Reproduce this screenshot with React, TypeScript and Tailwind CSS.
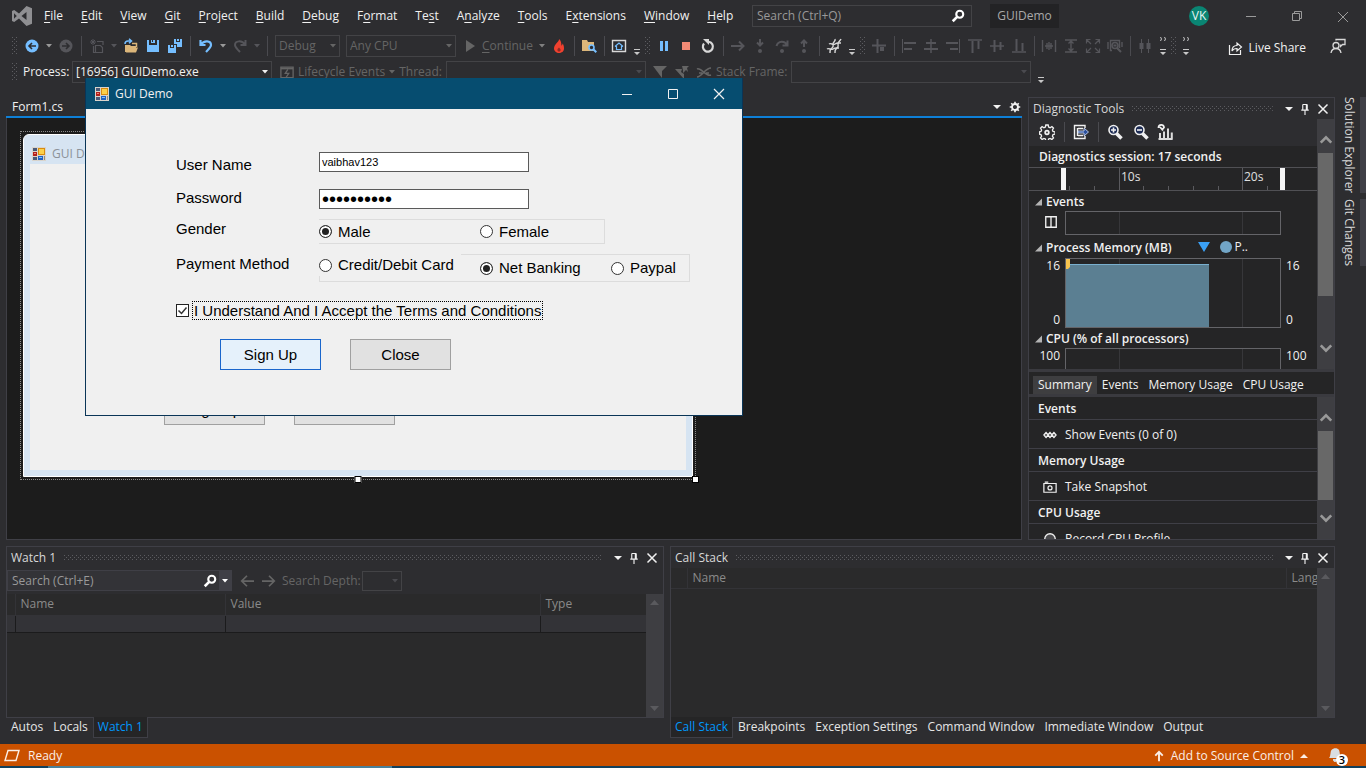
import React, { useId } from "react";
import clsx from "clsx";

const menus = [
  ["", "F", "ile"],
  ["", "E", "dit"],
  ["", "V", "iew"],
  ["", "G", "it"],
  ["", "P", "roject"],
  ["", "B", "uild"],
  ["", "D", "ebug"],
  ["F", "o", "rmat"],
  ["Te", "s", "t"],
  ["A", "n", "alyze"],
  ["", "T", "ools"],
  ["E", "x", "tensions"],
  ["", "W", "indow"],
  ["", "H", "elp"],
];

const stackTabs = [
  "Call Stack",
  "Breakpoints",
  "Exception Settings",
  "Command Window",
  "Immediate Window",
  "Output",
];

type IconProps = { children: React.ReactNode; className?: string; size?: number };

function Icon({ children, className, size = 16 }: IconProps) {
  return (
    <svg
      width={size}
      height={size}
      viewBox="0 0 16 16"
      fill="none"
      stroke="currentColor"
      strokeWidth="2"
      aria-hidden="true"
      className={clsx("shrink-0", className)}
    >
      {children}
    </svg>
  );
}

function ToolButton({ label, children, className }: { label: string; children: React.ReactNode; className?: string }) {
  return (
    <button type="button" aria-label={label} className={clsx("flex shrink-0 items-center justify-center", className)}>
      {children}
    </button>
  );
}

function Caret({ className }: { className?: string }) {
  return (
    <svg width="6" height="4" viewBox="0 0 6 4" aria-hidden="true" className={clsx("shrink-0", className)}>
      <path d="M0 0h6L3 3.5z" fill="currentColor" />
    </svg>
  );
}

function Dots({ className }: { className?: string }) {
  const id = useId();
  return (
    <svg aria-hidden="true" className={className}>
      <pattern id={id} width="4" height="4" patternUnits="userSpaceOnUse">
        <rect width="1" height="1" fill="#5c5c60" />
        <rect x="2" y="2" width="1" height="1" fill="#5c5c60" />
      </pattern>
      <rect width="100%" height="100%" fill={`url(#${id})`} />
    </svg>
  );
}

function Grip() {
  return <Dots className="h-[18px] w-[5px] shrink-0" />;
}

function Sep({ tight }: { tight?: boolean }) {
  return <span className={clsx("h-5 w-px shrink-0 bg-[#4a4a4f]", tight ? "ml-px" : "mx-px")} />;
}

function Overflow({ chevrons }: { chevrons?: boolean }) {
  return (
    <ToolButton label="Toolbar options">
      <svg width="8" height="20" viewBox="0 0 8 20" fill="#c8c8c8" aria-hidden="true">
        {chevrons && <path d="M1 1h1l1 2-1 2H1l1-2zM5 1h1l1 2-1 2H5l1-2z" />}
        <path d="M1 13h6v1H1zM1 16h6l-3 3z" />
      </svg>
    </ToolButton>
  );
}

function Combo({ label, value, className, tone }: { label: string; value: string; className: string; tone: string }) {
  return (
    <span className={clsx("relative flex shrink-0 items-center", className, tone)}>
      <select
        aria-label={label}
        defaultValue={value}
        className="h-full w-full appearance-none border border-[#434346] bg-transparent pl-[3px] outline-none"
      >
        <option>{value}</option>
      </select>
      <Caret className="pointer-events-none absolute right-1" />
    </span>
  );
}

function FormIcon({ className }: { className?: string }) {
  return (
    <svg width="14" height="14" viewBox="0 0 14 14" aria-hidden="true" className={className}>
      <path d="M0 0h14v14H0z" fill="#d9d4cc" />
      <path d="M1 1h4v3H1zM1 10h4v3H1z" fill="#4a5a78" />
      <path d="M1 5h4v4H1z" fill="#b3201a" />
      <path d="M2 6h2v1H2z" fill="#e8877c" />
      <path d="M6 1h7v7H6z" fill="#d98c10" />
      <path d="M7 2h5v5H7z" fill="#fbd04a" />
      <path d="M6 9h5v4H6z" fill="#1f62c4" />
      <path d="M7 10h3v1H7z" fill="#7fc0f5" />
      <path d="M12 9h1v4h-1z" fill="#8d8a85" />
    </svg>
  );
}

function Magnifier({ className }: { className?: string }) {
  return (
    <Icon size={14} className={className}>
      <circle cx="10" cy="6" r="4" strokeWidth="2.4" />
      <path d="M7 9 2 14" strokeWidth="3" />
    </Icon>
  );
}

function TitleBar() {
  return (
    <header className="flex h-8 shrink-0 items-center pl-3">
      <svg width="20" height="20" viewBox="0 0 20 20" aria-hidden="true" className="shrink-0">
        <path
          fillRule="evenodd"
          fill="#8f8f92"
          d="M14.5 0 20 2.3v15.4L14.5 20 7 12.5 2.2 16 0 15V5l2.2-1L7 7.5zM14.5 6l-5 4 5 4zM2 7.3v5.4L4.8 10z"
        />
      </svg>
      <nav className="ml-3 flex gap-[18px]">
        {menus.map(([before, key, after]) => (
          <button key={key + after} type="button" className="whitespace-nowrap">
            {before}
            <u className="underline-offset-2">{key}</u>
            {after}
          </button>
        ))}
      </nav>
      <label className="ml-auto flex h-[22px] w-[220px] shrink-0 items-center border border-[#434346] px-1">
        <input
          aria-label="Search"
          placeholder="Search (Ctrl+Q)"
          className="min-w-0 flex-1 bg-transparent outline-none placeholder:text-[#999999]"
        />
        <Magnifier className="mr-0.5 text-white" />
      </label>
      <span className="ml-[18px] flex h-6 w-[69px] shrink-0 items-center justify-center bg-[#232325] text-[#a9a9a9]">
        GUIDemo
      </span>
      <button
        type="button"
        className="ml-[130px] size-5 shrink-0 rounded-full bg-[#0a8573] text-center leading-5 text-[#e8f5f3]"
      >
        VK
      </button>
      <div className="ml-[19px] flex text-[#9a9a9a]">
        <ToolButton label="Minimize" className="w-[46px]">
          <Icon>
            <path d="M3 8.500h10" strokeWidth="1" />
          </Icon>
        </ToolButton>
        <ToolButton label="Restore" className="w-[46px]">
          <Icon>
            <path d="M3.500 5.500h7v7h-7zM5.500 5.500v-2h7v7h-2" strokeWidth="1" />
          </Icon>
        </ToolButton>
        <ToolButton label="Close window" className="w-[46px]">
          <Icon>
            <path d="m3 4 10 10M13 4 3 14" strokeWidth="1" />
          </Icon>
        </ToolButton>
      </div>
    </header>
  );
}

function StandardToolbar() {
  return (
    <div className="flex h-7 shrink-0 items-center pl-3 text-[#55555a]">
      <div className="flex items-center gap-1.5">
        <Grip />
        <ToolButton label="Back" className="ml-px text-[#75beff]">
          <Icon>
            <circle cx="8" cy="8" r="6.500" fill="currentColor" stroke="none" />
            <path d="M12 8H5M8 5 5 8l3 3" stroke="#2d2d30" strokeWidth="1.600" />
          </Icon>
        </ToolButton>
        <Caret className="text-[#999999]" />
        <ToolButton label="Forward">
          <Icon>
            <circle cx="8" cy="8" r="6.500" fill="currentColor" stroke="none" />
            <path d="M4 8h7M8 5l3 3-3 3" stroke="#2d2d30" strokeWidth="1.600" />
          </Icon>
        </ToolButton>
        <Sep />
        <ToolButton label="New project">
          <Icon>
            <path d="M4 1v6M1 4h6M2 2l4 4M6 2 2 6" strokeWidth="1" />
            <path d="M8 3.500h6M14 3v4M4.500 8v6.500H11M6.500 7.500h5l2 2v5h-7z" strokeWidth="1.200" />
          </Icon>
        </ToolButton>
        <Caret />
        <ToolButton label="Open">
          <Icon>
            <path d="M2 14V7h5l1 1h5v2H6l-2 4z" fill="#dcb67a" stroke="none" />
            <path d="M5.500 9.500H15L13 14.500H3z" fill="#dcb67a" stroke="none" />
            <path d="M2 6c0-2 1-3 3-3h3M6 .8 8.500 3 6 5.200" stroke="#75beff" strokeWidth="1.500" />
            <path d="M9 5.500h4.500V9" stroke="#dcb67a" strokeWidth="1.500" />
          </Icon>
        </ToolButton>
        <ToolButton label="Save" className="text-[#75beff]">
          <Icon>
            <path d="M2 2h2v5h8V2h2v12H2zM6 2h4v3H6z" fill="currentColor" stroke="none" />
            <path d="M7 2h1v2H7z" fill="#2d2d30" stroke="none" />
          </Icon>
        </ToolButton>
        <ToolButton label="Save all" className="text-[#75beff]">
          <Icon>
            <path
              d="M7 1h2v3h4V1h2v8h-5V6H7zM10 1h2v2h-2zM1 7h2v3h4V7h2v8H1zM4 7h2v2H4z"
              fill="currentColor"
              stroke="none"
            />
          </Icon>
        </ToolButton>
        <Sep />
        <ToolButton label="Undo" className="text-[#75beff]">
          <Icon>
            <path d="M2.500 2v5h5M3 6.500C6 2 13 2.500 13 7c0 2-1 3-5 7" strokeWidth="2.200" />
          </Icon>
        </ToolButton>
        <Caret className="text-[#999999]" />
        <ToolButton label="Redo">
          <Icon>
            <path d="M13.500 2v5h-5M13 6.500C10 2 3 2.500 3 7c0 2 1 3 5 7" strokeWidth="2" />
          </Icon>
        </ToolButton>
        <Caret />
        <Sep />
        <Combo label="Configuration" value="Debug" className="h-[22px] w-[65px]" tone="text-[#656565]" />
        <Combo label="Platform" value="Any CPU" className="h-[22px] w-[110px]" tone="text-[#656565]" />
        <button type="button" className="flex items-center gap-1 text-[#656565]">
          <Icon>
            <path d="M4 2v12l9-6z" fill="currentColor" stroke="none" />
          </Icon>
          <span>
            <u className="underline-offset-2">C</u>ontinue
          </span>
        </button>
        <Caret className="text-[#808080]" />
        <ToolButton label="Hot reload">
          <Icon>
            <path
              d="M8 1c.5 2.500-5 5-5 9.500C3 13 5.500 15 8 15s5-1.500 5-4.500c0-2-.4-3.500-1.200-5-.2 1-.8 1.800-1.400 2.200C10.500 5.500 10 2.500 8 1z"
              fill="#f0412f"
              stroke="none"
            />
            <path d="M8 9.500c-1 1-1.600 1.600-1.600 2.600 0 .9.700 1.500 1.600 1.500s1.700-.6 1.700-1.500c0-1-.9-1.600-1.700-2.600z" fill="#8e2a24" stroke="none" />
          </Icon>
        </ToolButton>
        <Sep tight />
        <ToolButton label="Find in files">
          <Icon>
            <path d="M1 2h5l1 2h6v9H1z" fill="#dcb67a" stroke="none" />
            <circle cx="10.500" cy="9.500" r="2.500" fill="#2d2d30" stroke="#75beff" strokeWidth="1.600" />
            <path d="m12.300 11.300 3 3" stroke="#75beff" />
          </Icon>
        </ToolButton>
        <Sep tight />
        <ToolButton label="Start window" className="text-[#d8d8d8]">
          <Icon>
            <path d="M1.500 2.500h13v11h-13z" strokeWidth="1.400" />
            <path d="M4 8.500 8 5l4 3.500M5.500 8v3.500h5V8" stroke="#75beff" strokeWidth="1.200" />
          </Icon>
        </ToolButton>
        <Overflow />
        <span className="-ml-0.5 flex">
          <Grip />
        </span>
        <ToolButton label="Break all" className="text-[#75beff]">
          <Icon>
            <path d="M5.500 3v10M10.500 3v10" strokeWidth="3" />
          </Icon>
        </ToolButton>
        <ToolButton label="Stop debugging" className="text-[#f38b76]">
          <Icon>
            <path d="M4 4h8v8H4z" fill="currentColor" stroke="none" />
          </Icon>
        </ToolButton>
        <ToolButton label="Restart" className="text-[#d8d8d8]">
          <Icon>
            <path d="M4 5.500a5 5 0 1 0 5-1.700" strokeWidth="2.200" />
            <path d="M3 1h6v6z" fill="currentColor" stroke="none" />
          </Icon>
        </ToolButton>
        <Sep tight />
        <ToolButton label="Show next statement">
          <Icon>
            <path d="M1 8h12M9 3.500 13.500 8 9 12.500" />
          </Icon>
        </ToolButton>
        <ToolButton label="Step into">
          <Icon>
            <path d="M8 1v6M5 4.500l3 3 3-3" />
            <circle cx="8" cy="13" r="2" fill="currentColor" stroke="none" />
          </Icon>
        </ToolButton>
        <ToolButton label="Step over">
          <Icon>
            <path d="M2.500 8C4 2.500 11 2.500 13 7M13.500 2.500v5h-5" />
            <circle cx="8" cy="13" r="2" fill="currentColor" stroke="none" />
          </Icon>
        </ToolButton>
        <ToolButton label="Step out">
          <Icon>
            <path d="M8 9V3M5 5.500l3-3 3 3" />
            <circle cx="8" cy="13" r="2" fill="currentColor" stroke="none" />
          </Icon>
        </ToolButton>
        <Sep tight />
        <ToolButton label="Show threads in source" className="text-[#d8d8d8]">
          <Icon>
            <path d="M9 1c1 2-2 3-2 5s1 2-1 4-2 2-2 5M15 1c-1 2-3 3-3 5s1 2-1 4-2 2-2 5" strokeWidth="1.400" />
            <path d="M3 6c2-1.500 4 1.500 6 0s4-1 6-1M1 11c2-1.500 4 1.500 6 0s4-1 6-1" strokeWidth="1.400" />
          </Icon>
        </ToolButton>
        <Overflow />
        <span className="-ml-0.5 flex">
          <Grip />
        </span>
        <ToolButton label="Align to grid">
          <Icon>
            <path d="M1 7.500h14M6.500 1v14" />
            <path d="M9 9h4v4H9z" fill="currentColor" stroke="none" />
          </Icon>
        </ToolButton>
        <Sep tight />
        <ToolButton label="Align lefts">
          <Icon>
            <path d="M1.500 1v14" strokeWidth="1" />
            <path d="M3 5h12M3 11h8" />
          </Icon>
        </ToolButton>
        <ToolButton label="Align centers">
          <Icon>
            <path d="M8 1v14" strokeWidth="1.500" />
            <path d="M3 5h10M1 11h14" />
          </Icon>
        </ToolButton>
        <ToolButton label="Align rights">
          <Icon>
            <path d="M14.500 1v14" strokeWidth="1" />
            <path d="M1 5h12M5 11h8" />
          </Icon>
        </ToolButton>
        <ToolButton label="Align tops">
          <Icon>
            <path d="M1 2h14" strokeWidth="1.500" />
            <path d="M5.500 3v12M11.500 3v8" />
          </Icon>
        </ToolButton>
        <ToolButton label="Align middles">
          <Icon>
            <path d="M1 8h14" strokeWidth="1.500" />
            <path d="M5.500 2v12M11.500 4v8" />
          </Icon>
        </ToolButton>
        <ToolButton label="Align bottoms">
          <Icon>
            <path d="M1 14h14" strokeWidth="1.500" />
            <path d="M5.500 1v12M11.500 5v8" />
          </Icon>
        </ToolButton>
        <Sep tight />
        <ToolButton label="Make same width">
          <Icon>
            <path d="M1.500 2v12M14.500 2v12M4 8h8M6 5v6M10 5v6M8 4v8" strokeWidth="1.400" />
          </Icon>
        </ToolButton>
        <ToolButton label="Make same height">
          <Icon>
            <path d="M2 2h12M2 14h12M8 3v10M5.500 5.500 8 3l2.500 2.500M5.500 10.500 8 13l2.500-2.500" strokeWidth="1.400" />
          </Icon>
        </ToolButton>
        <ToolButton label="Make same size">
          <Icon>
            <path d="M1.500 5.500v-4h4M10.500 1.500h4v4M14.500 10.500v4h-4M5.500 14.500h-4v-4M2 2l4 4M14 2l-4 4M14 14l-4-4M2 14l4-4" strokeWidth="1.200" />
          </Icon>
        </ToolButton>
        <ToolButton label="Size to grid">
          <Icon>
            <path d="M5 12.500H3.500v-10h9V10M1 4v7M15 4v5" strokeWidth="1.400" />
            <circle cx="8" cy="7.500" r="3" strokeWidth="1.600" />
            <path d="m10 10 4 4M6.500 7.500h3" />
          </Icon>
        </ToolButton>
        <Sep tight />
        <ToolButton label="Horizontal spacing">
          <Icon>
            <path d="M4.500 1v14M11.500 1v14" strokeWidth="1" />
            <path d="M4.500 5v6M11.500 5v6" strokeWidth="4" />
          </Icon>
        </ToolButton>
        <Overflow chevrons />
        <span className="-ml-0.5 flex">
          <Grip />
        </span>
        <Overflow chevrons />
      </div>
      <button type="button" className="ml-auto flex items-center gap-1.5 pt-1 text-[#f1f1f1]">
        <Icon>
          <path d="M2.500 5v9.500h11V10" strokeWidth="1.200" />
          <path d="M5 11c0-4 2-5.500 5-5.500V3l4.500 4L10 11V8.500C7.500 8.500 6 9 5 11z" strokeWidth="1.200" />
        </Icon>
        <span className="whitespace-nowrap">Live Share</span>
      </button>
      <ToolButton label="Send feedback" className="ml-6 mr-5 text-[#d8d8d8]">
        <Icon>
          <circle cx="6" cy="7.500" r="3" strokeWidth="1.300" />
          <path d="M1 15c.5-3 2.500-4.500 5-4.500s4.500 1.500 5 4.500M6 2.500V1.500h9v5h-2.500l-2 2v-2" strokeWidth="1.300" />
        </Icon>
      </ToolButton>
    </div>
  );
}

function DebugToolbar() {
  return (
    <div className="flex h-6 shrink-0 items-center pl-3 text-[#656565]">
      <Grip />
      <span className="w-[55px] pl-1.5 text-[#f1f1f1]">Process:</span>
      <Combo label="Process" value="[16956] GUIDemo.exe" className="h-[22px] w-[200px]" tone="text-[#f1f1f1]" />
      <button type="button" className="ml-2 flex items-center gap-1">
        <Icon size={14}>
          <path d="M1 2.500h14v12H1z" strokeWidth="1.500" />
          <path d="M1 3h14v2H1z" fill="currentColor" stroke="none" />
          <path d="M9 5 6 9.500h4L7 14" strokeWidth="1.500" />
        </Icon>
        <span className="whitespace-nowrap">Lifecycle Events</span>
        <Caret />
      </button>
      <span className="ml-1">Thread:</span>
      <Combo label="Thread" value="" className="ml-1 h-[22px] w-[200px]" tone="text-[#4a4a4f]" />
      <div className="ml-1.5 flex gap-1.5">
        <ToolButton label="Flag thread">
          <Icon>
            <path d="M1 2h14l-5 5v7L1 2z" fill="currentColor" stroke="none" />
          </Icon>
        </ToolButton>
        <ToolButton label="Show only flagged threads">
          <Icon>
            <path d="M1 5h7l-1 3 3 2v5L1 5zM8 2h7l-2 2 1 4-2-2-3 3V6z" fill="currentColor" stroke="none" />
          </Icon>
        </ToolButton>
        <ToolButton label="Toggle threads">
          <Icon>
            <path d="M1 13c5 0 8-9 14-9M1 5c4-2 9 8 14 6M3 9h3M10 9h3" strokeWidth="1.600" />
          </Icon>
        </ToolButton>
      </div>
      <span className="ml-1 whitespace-nowrap">Stack Frame:</span>
      <Combo label="Stack frame" value="" className="ml-1 h-[22px] w-[240px]" tone="text-[#4a4a4f]" />
      <span className="ml-1.5 flex pt-1">
        <Overflow />
      </span>
    </div>
  );
}

function PanelHeader({ title }: { title: string }) {
  return (
    <div className="flex h-[21px] shrink-0 items-center pl-1 pr-[5px]">
      <h2 className="whitespace-nowrap text-[#d8d8d8]">{title}</h2>
      <Dots className="ml-2 mr-3 h-[5px] min-w-0 flex-1" />
      <div className="flex items-center gap-1.5 text-[#f1f1f1]">
        <ToolButton label="Window position">
          <svg width="8" height="4" viewBox="0 0 8 4" aria-hidden="true">
            <path d="M0 0h8L4 4z" fill="currentColor" />
          </svg>
        </ToolButton>
        <ToolButton label="Auto hide">
          <Icon size={12}>
            <path d="M5 2h6M5 9V2M11 9V2M3 9.500h10M8 10v6M9.800 2v7" strokeWidth="1.500" />
          </Icon>
        </ToolButton>
        <ToolButton label="Close panel">
          <Icon size={12}>
            <path d="m2 2 12 12M14 2 2 14" />
          </Icon>
        </ToolButton>
      </div>
    </div>
  );
}

function DemoButton({ primary, children }: { primary?: boolean; children: React.ReactNode }) {
  return (
    <button
      type="button"
      className={clsx(
        "h-[31px] w-[101px] border text-[15px]",
        primary ? "border-[#1a66cc] bg-[#e5f1fb]" : "border-[#a0a0a0] bg-[#e1e1e1]",
      )}
    >
      {children}
    </button>
  );
}

function Radio({ name, label, checked, className }: { name: string; label: string; checked?: boolean; className?: string }) {
  return (
    <label className={clsx("flex items-center gap-1.5 whitespace-nowrap", className)}>
      <input
        type="radio"
        name={name}
        defaultChecked={checked}
        className="size-[13px] shrink-0 appearance-none rounded-full border border-[#333333] bg-white checked:bg-[#222222] checked:shadow-[inset_0_0_0_2px_white]"
      />
      {label}
    </label>
  );
}

function DesignerForm() {
  return (
    <div className="relative h-[349px] w-[676px] border border-dotted border-[#8a8a8a] p-0.5">
      <div className="flex h-full flex-col rounded-t-md border border-white bg-[#d6e4f2] px-1.5 pb-1.5 text-black">
        <div className="flex h-[29px] shrink-0 items-center gap-1.5 pl-0.5 pt-2 text-[#8c9299]">
          <FormIcon />
          GUI Demo
        </div>
        <div className="flex flex-1 items-end gap-[29px] bg-[#f0f0f0] pb-[45px] pl-[134px] font-['Liberation_Sans',sans-serif]">
          <DemoButton>Sign Up</DemoButton>
          <DemoButton>Close</DemoButton>
        </div>
      </div>
      <span className="absolute -bottom-1 left-1/2 size-[7px] -translate-x-1/2 border border-black bg-white" />
      <span className="absolute -bottom-1 -right-1 size-[7px] border border-black bg-white" />
    </div>
  );
}

function Editor() {
  return (
    <main className="flex min-w-0 flex-1 flex-col">
      <div className="flex h-[21px] shrink-0 items-start border-b-2 border-[#0e7fd6] pl-1.5">
        <button type="button" className="pt-0.5 text-[#f1f1f1]">
          Form1.cs
        </button>
        <div className="ml-auto flex items-center gap-2 pr-px pt-1 text-[#f1f1f1]">
          <ToolButton label="Open documents">
            <svg width="8" height="4" viewBox="0 0 8 4" aria-hidden="true">
              <path d="M0 0h8L4 4z" fill="currentColor" />
            </svg>
          </ToolButton>
          <ToolButton label="Document options">
            <Icon size={12}>
              <circle cx="8" cy="8" r="4" strokeWidth="2.500" />
              <path d="M8 1v3M8 12v3M1 8h3M12 8h3M3 3l2 2M11 11l2 2M13 3l-2 2M5 11l-2 2" strokeWidth="2.200" />
            </Icon>
          </ToolButton>
        </div>
      </div>
      <div className="flex-1 border border-t-0 border-[#3f3f46] bg-[#1c1c1c] pl-[13px] pt-[13px]">
        <DesignerForm />
      </div>
    </main>
  );
}

function ScrollRail({ thumb }: { thumb: string }) {
  return (
    <div className="flex w-[17px] shrink-0 flex-col items-center bg-[#3e3e42] text-[#999999]">
      <Icon size={14} className="mb-1.5 mt-3.5">
        <path d="m2 11 6-6 6 6" strokeWidth="3" />
      </Icon>
      <span className={clsx("w-[15px] bg-[#686868]", thumb)} />
      <Icon size={14} className="mb-3.5 mt-auto">
        <path d="m2 5 6 6 6-6" strokeWidth="3" />
      </Icon>
    </div>
  );
}

function SectionTitle({ children }: { children: React.ReactNode }) {
  return (
    <h3 className="flex h-5 shrink-0 items-center gap-1 whitespace-nowrap pl-1.5 pt-0.5 font-semibold text-[#f1f1f1]">
      <svg width="7" height="8" viewBox="0 0 8 8" aria-hidden="true">
        <path d="M8 0v8H0z" fill="#b4b4b4" />
      </svg>
      {children}
    </h3>
  );
}

function Graph({ low, high, height, fill }: { low?: string; high?: string; height: number; fill?: boolean }) {
  return (
    <div className="flex shrink-0">
      <div className="flex w-9 flex-col justify-between pr-[5px] text-right">
        <span>{high}</span>
        <span>{low}</span>
      </div>
      <svg width="216" height={height} aria-hidden="true">
        <path d={`M54.500 0v${height}M177.500 0v${height}`} stroke="#37373a" />
        {fill && (
          <g>
            <path d={`M0 6h144v${height - 6}H0z`} fill="#5b7f92" />
            <path d="M0 6.500h144" stroke="#79b0cf" />
            <path d="M1 1h4v8l-2 2H1z" fill="#f8c44e" />
          </g>
        )}
        <rect x="0.500" y="0.500" width="215" height={height - 1} fill="none" stroke="#646468" />
      </svg>
      <div className="flex flex-col justify-between pl-[5px]">
        <span>{high}</span>
        <span>{low}</span>
      </div>
    </div>
  );
}

function SummaryHeading({ children }: { children: React.ReactNode }) {
  return <h3 className="h-[23px] shrink-0 border-b border-[#3f3f46] pl-[9px] pt-1 font-semibold">{children}</h3>;
}

function SummaryAction({ icon, children }: { icon: React.ReactNode; children: React.ReactNode }) {
  return (
    <button
      type="button"
      className="flex h-[29px] w-full shrink-0 items-center gap-2 border-b border-[#3f3f46] pl-3.5 pt-0.5"
    >
      {icon}
      {children}
    </button>
  );
}

function DiagnosticTools() {
  return (
    <aside className="flex h-[443px] w-[307px] shrink-0 flex-col border border-[#3f3f46] text-[#f1f1f1]">
      <PanelHeader title="Diagnostic Tools" />
      <div className="flex h-[250px] shrink-0">
        <div className="flex min-w-0 flex-1 flex-col overflow-hidden bg-[#252526]">
          <div className="flex h-[27px] shrink-0 items-center gap-2 bg-[#2d2d30] pb-0.5 pl-2.5">
            <ToolButton label="Settings">
              <Icon>
                <path
                  d="M6.800 1h2.400l.4 2 1.500.7 1.800-1.100 1.600 1.600-1.100 1.800.6 1.500 2 .3v2.400l-2 .4-.6 1.500 1.100 1.800-1.600 1.600-1.800-1.100-1.500.6-.4 2H6.800l-.4-2-1.500-.6-1.800 1.100-1.600-1.600 1.100-1.800L2 10.600l-1.500-.4V7.800L2 7.500 2.600 6 1.500 4.200l1.600-1.600 1.800 1.100L6.400 3z"
                  strokeWidth="1.300"
                />
                <circle cx="8" cy="8.500" r="1.800" strokeWidth="1.800" />
              </Icon>
            </ToolButton>
            <Sep tight />
            <ToolButton label="Export">
              <Icon>
                <path d="M12 4V1.500H1.500v13H12V12M5 4.500h5M5 11.500h5M4.500 4v8" strokeWidth="1.400" />
                <path d="M5 7h6V4l4.500 4-4.500 4V9H5z" fill="#2a4f9c" stroke="#d8e4ff" strokeWidth="0.800" />
              </Icon>
            </ToolButton>
            <Sep tight />
            <ToolButton label="Zoom in">
              <Icon>
                <path d="m9.500 9.500 5 5" strokeWidth="3.500" />
                <circle cx="6.500" cy="6" r="4.500" fill="#1d2c55" strokeWidth="1.600" />
                <path d="M4 6h5M6.500 3.500v5" strokeWidth="1.600" />
              </Icon>
            </ToolButton>
            <ToolButton label="Zoom out" className="ml-0.5">
              <Icon>
                <path d="m9.500 9.500 5 5" strokeWidth="3.500" />
                <circle cx="6.500" cy="6" r="4.500" fill="#1d2c55" strokeWidth="1.600" />
                <path d="M4 6h5" strokeWidth="1.600" />
              </Icon>
            </ToolButton>
            <ToolButton label="Reset view">
              <Icon>
                <path d="M1.500 4C1.500 0 7 0 7 3.500L5 6M3 3l3 3.500" strokeWidth="1.800" />
                <path d="M3 9v6.500M7 7.500v8M11 4.500v11M14.800 8.500v7M1.500 15h14" strokeWidth="2" stroke="#dcdcdc" />
              </Icon>
            </ToolButton>
          </div>
          <p className="h-[21px] shrink-0 pl-2.5 pt-[3px] font-semibold">Diagnostics session: 17 seconds</p>
          <svg width="288" height="24" className="shrink-0 border-y border-[#505054]">
            <path d="M90.500 0v22M213.500 0v22" stroke="#5a5a5e" />
            <path d="M40.500 18v4M65.500 18v4M114.500 18v4M139.500 18v4M164.500 18v4M189.500 18v4M238.500 18v4" stroke="#5a5a5e" />
            <path d="M32 0h5v22h-5zM251 0h5v22h-5z" fill="#f5f5f5" />
            <text x="92" y="13" fill="#e0e0e0">
              10s
            </text>
            <text x="215" y="13" fill="#e0e0e0">
              20s
            </text>
          </svg>
          <SectionTitle>Events</SectionTitle>
          <div className="flex shrink-0">
            <span className="flex w-9 items-center justify-end pb-0.5 pr-2">
              <Icon size={12}>
                <path d="M1 1h14v14H1zM8 1v14" strokeWidth="1.800" />
              </Icon>
            </span>
            <svg width="216" height="24" aria-hidden="true">
              <path d="M54.500 0v24M177.500 0v24" stroke="#37373a" />
              <rect x="0.500" y="0.500" width="215" height="23" fill="none" stroke="#646468" />
            </svg>
          </div>
          <div className="flex h-[23px] shrink-0 items-center">
            <SectionTitle>Process Memory (MB)</SectionTitle>
            <svg width="12" height="10" viewBox="0 0 12 10" aria-hidden="true" className="ml-auto">
              <path d="M0 0h12L6 10z" fill="#3aa0f5" />
            </svg>
            <span className="ml-2.5 size-3 rounded-full bg-[#72a5c6]" />
            <span className="ml-0.5 mr-[69px]">P..</span>
          </div>
          <Graph low="0" high="16" height={70} fill />
          <SectionTitle>CPU (% of all processors)</SectionTitle>
          <Graph high="100" height={70} />
        </div>
        <ScrollRail thumb="h-[143px]" />
      </div>
      <div className="flex h-7 shrink-0 items-end border-y-[3px] border-[#3a3a3f] bg-[#252526] pl-1">
        {["Summary", "Events", "Memory Usage", "CPU Usage"].map((tab, i) => (
          <button
            key={tab}
            type="button"
            className={clsx("h-[18px] whitespace-nowrap px-[5px]", i === 0 && "bg-[#3e3e40]")}
          >
            {tab}
          </button>
        ))}
      </div>
      <div className="flex min-h-0 flex-1">
        <div className="flex min-w-0 flex-1 flex-col overflow-hidden bg-[#252526]">
          <SummaryHeading>Events</SummaryHeading>
          <SummaryAction
            icon={
              <Icon size={14}>
                <path d="m1 8 2.500-3L6 8l-2.500 3zM5.500 8 8 5l2.500 3L8 11zM10 8l2.500-3L15 8l-2.500 3z" strokeWidth="1.400" fill="#5a5a5a" />
              </Icon>
            }
          >
            Show Events (0 of 0)
          </SummaryAction>
          <SummaryHeading>Memory Usage</SummaryHeading>
          <SummaryAction
            icon={
              <Icon size={14}>
                <path d="M1 4h14v10H1zM2 2.500h4" strokeWidth="1.400" />
                <circle cx="8" cy="9" r="2.300" strokeWidth="1.400" />
              </Icon>
            }
          >
            Take Snapshot
          </SummaryAction>
          <SummaryHeading>CPU Usage</SummaryHeading>
          <SummaryAction
            icon={
              <Icon size={14}>
                <circle cx="8" cy="8" r="6" strokeWidth="1.500" fill="#4a4a4d" />
              </Icon>
            }
          >
            Record CPU Profile
          </SummaryAction>
        </div>
        <ScrollRail thumb="h-[69px]" />
      </div>
    </aside>
  );
}

function ListRail() {
  return (
    <div className="flex w-[17px] shrink-0 flex-col items-center justify-between bg-[#3e3e42] py-1.5 text-[#5a5a5e]">
      <svg width="9" height="5" viewBox="0 0 9 5" aria-hidden="true">
        <path d="M0 5h9L4.500 0z" fill="currentColor" />
      </svg>
      <svg width="9" height="5" viewBox="0 0 9 5" aria-hidden="true">
        <path d="M0 0h9L4.500 5z" fill="currentColor" />
      </svg>
    </div>
  );
}

function BottomTabs({ tabs, active }: { tabs: string[]; active: string }) {
  return (
    <div className="-mt-px flex h-[21px] shrink-0">
      {tabs.map((tab) => (
        <button
          key={tab}
          type="button"
          className={clsx(
            "whitespace-nowrap border border-t-0 px-1",
            tab === active ? "border-[#3f3f46] bg-[#252526] text-[#0097fb]" : "border-transparent text-[#e6e6e6]",
          )}
        >
          {tab}
        </button>
      ))}
    </div>
  );
}

function WatchPanel() {
  return (
    <section className="flex min-w-0 flex-col">
      <div className="flex min-h-0 flex-1 flex-col border border-[#3f3f46]">
        <PanelHeader title="Watch 1" />
        <div className="flex h-[26px] shrink-0 items-start pt-0.5 text-[#656565]">
          <label className="flex h-[21px] w-[225px] items-center border border-[#3f3f46] bg-[#333337]">
            <input
              aria-label="Search watch"
              placeholder="Search (Ctrl+E)"
              className="min-w-0 flex-1 bg-transparent pl-1 outline-none placeholder:text-[#999999]"
            />
            <Magnifier className="mr-0.5 text-white" />
            <span className="flex h-full w-3 items-center justify-center bg-[#3f3f46] text-white">
              <Caret />
            </span>
          </label>
          <div className="flex h-[21px] items-center">
            <ToolButton label="Find previous" className="ml-2">
              <Icon size={14}>
                <path d="M16 8H2M8 2 2 8l6 6" />
              </Icon>
            </ToolButton>
            <ToolButton label="Find next" className="ml-2">
              <Icon size={14}>
                <path d="M0 8h14M8 2l6 6-6 6" />
              </Icon>
            </ToolButton>
            <span className="ml-1.5 whitespace-nowrap">Search Depth:</span>
            <Combo label="Search depth" value="" className="ml-px h-5 w-10" tone="text-[#4a4a4f]" />
          </div>
        </div>
        <div className="flex min-h-0 flex-1 bg-[#2a2a2b]">
          <div className="min-w-0 flex-1">
            <table className="w-full table-fixed border-collapse text-left text-[#8a8a8a]">
              <colgroup>
                <col className="w-2" />
                <col className="w-[210px]" />
                <col />
                <col className="w-[106px]" />
              </colgroup>
              <thead>
                <tr className="h-[21px]">
                  <td className="border-b border-r border-[#333337]" />
                  {["Name", "Value", "Type"].map((head) => (
                    <th key={head} className="border-b border-r border-[#333337] pl-[5px] font-normal last:border-r-0">
                      {head}
                    </th>
                  ))}
                </tr>
              </thead>
              <tbody>
                <tr className="h-[17px] bg-[#333337]">
                  <td className="border-b border-r border-[#1b1b1c]" />
                  <td className="border-b border-r border-[#1b1b1c]" />
                  <td className="border-b border-r border-[#1b1b1c]" />
                  <td className="border-b border-[#1b1b1c]" />
                </tr>
              </tbody>
            </table>
          </div>
          <ListRail />
        </div>
      </div>
      <BottomTabs tabs={["Autos", "Locals", "Watch 1"]} active="Watch 1" />
    </section>
  );
}

function CallStackPanel() {
  return (
    <section className="flex min-w-0 flex-col">
      <div className="flex min-h-0 flex-1 flex-col border border-[#3f3f46]">
        <PanelHeader title="Call Stack" />
        <div className="flex min-h-0 flex-1 bg-[#2a2a2b]">
          <div className="min-w-0 flex-1 overflow-hidden">
            <table className="w-full table-fixed border-collapse text-left text-[#8a8a8a]">
              <colgroup>
                <col className="w-4" />
                <col />
                <col className="w-[31px]" />
              </colgroup>
              <thead>
                <tr className="h-5">
                  <td className="border-b border-r border-[#333337]" />
                  <th className="border-b border-r border-[#333337] pl-[5px] font-normal">Name</th>
                  <th className="overflow-hidden border-b border-[#333337] pl-[5px] font-normal">Lang</th>
                </tr>
              </thead>
            </table>
          </div>
          <ListRail />
        </div>
      </div>
      <BottomTabs tabs={stackTabs} active="Call Stack" />
    </section>
  );
}

function SideTabs() {
  return (
    <div className="flex w-[31px] shrink-0 flex-col gap-1.5">
      {["Solution Explorer", "Git Changes"].map((tab) => (
        <button
          key={tab}
          type="button"
          className="w-full whitespace-nowrap border-r-[6px] border-[#3f3f46] pl-1.5 pr-[3px] text-[#d8d8d8] [writing-mode:vertical-rl]"
        >
          {tab}
        </button>
      ))}
    </div>
  );
}

function StatusBar() {
  return (
    <footer className="shrink-0">
      <div className="flex h-[22px] items-center bg-[#ca5100] pl-1 text-[#fbeee6]">
        <Icon>
          <path d="M4 3.500h11l-3 10H1z" strokeWidth="1.400" />
        </Icon>
        <span className="ml-2 pt-0.5">Ready</span>
        <button type="button" className="ml-auto flex items-center gap-1.5 whitespace-nowrap pt-0.5">
          <Icon size={12}>
            <path d="M8 15V3M3 7.500l5-5 5 5" strokeWidth="2.500" />
          </Icon>
          Add to Source Control
          <svg width="8" height="4" viewBox="0 0 8 4" aria-hidden="true">
            <path d="M0 4h8L4 0z" fill="currentColor" />
          </svg>
        </button>
        <button type="button" aria-label="Notifications" className="relative ml-5 mr-[18px] h-[18px] w-5">
          <svg width="14" height="14" viewBox="0 0 14 14" fill="#d9dde0" aria-hidden="true">
            <path d="M1 10c2-2 1-6 2.500-8 2-2.500 6-2.500 7.500 0 1 2 .5 5 2 8zM5 11h4v1.500L7.500 14h-1L5 12.500z" />
          </svg>
          <span className="absolute -bottom-0.5 right-0 size-3 rounded-full bg-white text-center text-[11px] font-semibold leading-3 text-black">
            3
          </span>
        </button>
      </div>
      <div className="flex h-0.5 bg-[#12405c]">
        <span className="ml-12 w-[344px] bg-[#4a8098]" />
      </div>
    </footer>
  );
}

function DemoWindow() {
  return (
    <div className="absolute left-[85px] top-[78px] flex h-[338px] w-[658px] flex-col border border-t-0 border-[#0a3557] bg-[#f0f0f0] text-black">
      <div className="flex h-[31px] shrink-0 items-center bg-[#064d70] pl-[9px] text-[#f1f1f1]">
        <FormIcon />
        <span className="ml-1.5">GUI Demo</span>
        <div className="ml-auto flex">
          <ToolButton label="Minimize" className="w-[46px]">
            <Icon>
              <path d="M3 8.500h10" strokeWidth="1" />
            </Icon>
          </ToolButton>
          <ToolButton label="Maximize" className="w-[46px]">
            <Icon>
              <path d="M3.500 3.500h9v9h-9z" strokeWidth="1" />
            </Icon>
          </ToolButton>
          <ToolButton label="Close" className="w-[46px]">
            <Icon>
              <path d="m3 3 10 10M13 3 3 13" strokeWidth="1.200" />
            </Icon>
          </ToolButton>
        </div>
      </div>
      <form className="pl-[90px] pt-[43px] font-['Liberation_Sans',sans-serif] text-[15px] leading-5">
        <div className="flex h-5 items-center">
          <label htmlFor="user" className="w-[143px] pt-1.5">
            User Name
          </label>
          <input
            id="user"
            defaultValue="vaibhav123"
            className="h-5 w-[210px] border border-[#5a5a5a] bg-white px-0.5 text-[11px] outline-none"
          />
        </div>
        <div className="mt-[17px] flex h-5 items-center">
          <label htmlFor="pass" className="w-[143px] pb-0.5">
            Password
          </label>
          <input
            id="pass"
            type="password"
            defaultValue="demo123456"
            className="h-5 w-[210px] border border-[#5a5a5a] bg-white px-0.5 text-xl leading-5 outline-none"
          />
        </div>
        <div className="mt-2.5 flex h-[25px]">
          <span className="w-[143px]">Gender</span>
          <fieldset aria-label="Gender" className="grid w-[286px] grid-cols-[161px_1fr] border border-[#dcdcdc]">
            <Radio name="gender" label="Male" checked className="-ml-px bg-[#f0f0f0]" />
            <Radio name="gender" label="Female" className="-ml-px" />
          </fieldset>
        </div>
        <div className="mt-2.5 flex h-7">
          <span className="w-[143px]">Payment Method</span>
          <fieldset
            aria-label="Payment method"
            className="grid w-[371px] grid-cols-[161px_131px_1fr] border border-[#dcdcdc]"
          >
            <Radio name="payment" label="Credit/Debit Card" className="-ml-px -mt-px mr-5 h-[22px] bg-[#f0f0f0]" />
            <Radio name="payment" label="Net Banking" checked className="-ml-px" />
            <Radio name="payment" label="Paypal" className="-ml-px" />
          </fieldset>
        </div>
        <label className="mt-[19px] flex h-[19px] w-max items-center">
          <span className="grid">
            <input
              type="checkbox"
              defaultChecked
              className="peer size-[13px] appearance-none border border-[#222222] bg-white [grid-area:1/1]"
            />
            <svg
              width="13"
              height="13"
              viewBox="0 0 13 13"
              fill="none"
              stroke="#333333"
              strokeWidth="1.500"
              aria-hidden="true"
              className="pointer-events-none invisible [grid-area:1/1] peer-checked:visible"
            >
              <path d="m2.500 6.500 3 3 5-6" />
            </svg>
          </span>
          <span className="ml-[3px] h-[19px] border border-dotted border-black px-px leading-[18px]">
            I Understand And I Accept the Terms and Conditions
          </span>
        </label>
        <div className="mt-[19px] flex gap-[29px] pl-11">
          <DemoButton primary>Sign Up</DemoButton>
          <DemoButton>Close</DemoButton>
        </div>
      </form>
    </div>
  );
}

export default function App() {
  return (
    <div className="relative flex min-h-screen flex-col overflow-hidden bg-[#2d2d30] font-['Open_Sans',sans-serif] text-xs text-[#f1f1f1]">
      <TitleBar />
      <StandardToolbar />
      <DebugToolbar />
      <div className="flex flex-1 pl-1.5 pt-[13px]">
        <div className="flex min-w-0 flex-1 flex-col gap-1.5 pb-1.5">
          <div className="flex flex-1 gap-1.5">
            <Editor />
            <DiagnosticTools />
          </div>
          <div className="grid h-48 shrink-0 grid-cols-[658fr_665fr] gap-1.5">
            <WatchPanel />
            <CallStackPanel />
          </div>
        </div>
        <SideTabs />
      </div>
      <StatusBar />
      <DemoWindow />
    </div>
  );
}
